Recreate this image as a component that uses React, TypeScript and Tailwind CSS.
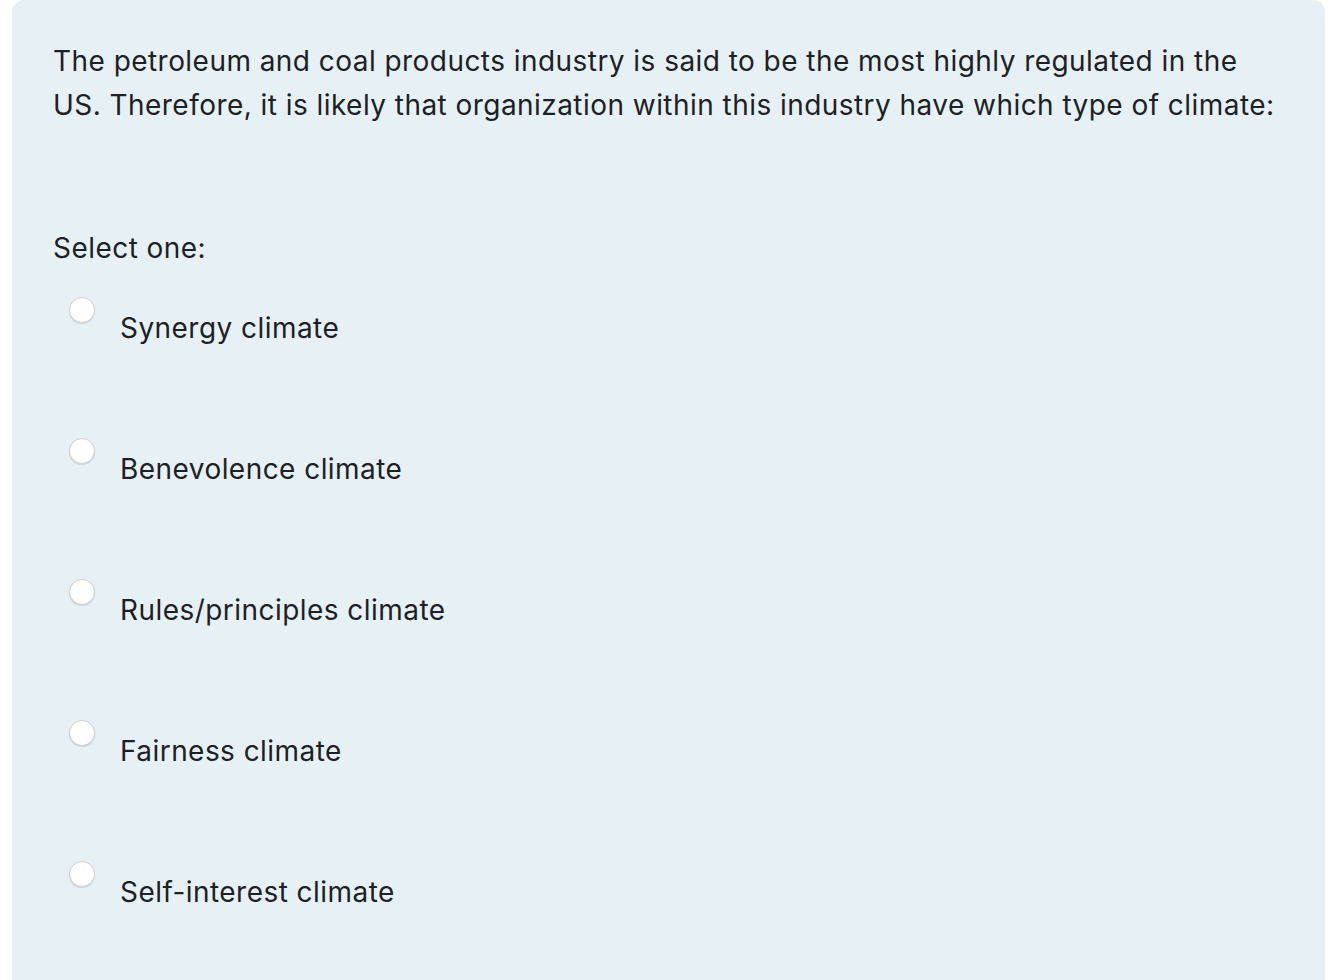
const options = [
  "Synergy climate",
  "Benevolence climate",
  "Rules/principles climate",
  "Fairness climate",
  "Self-interest climate",
];

function Radio() {
  return (
    <span className="block h-[26px] w-[26px] shrink-0 rounded-full border border-[#cfcfcf] bg-white shadow-[0_1px_1px_rgba(0,0,0,0.12)]" />
  );
}

export default function App() {
  return (
    <div className="min-h-[980px] bg-white pl-[12px] pr-[18px] font-['Inter',sans-serif] tracking-[0.45px] text-[#1d2125]">
      <div className="min-h-[980px] rounded-t-[12px] bg-[#e7f1f5] pl-[41px] pr-[41px] pt-[39px]">
        <p className="text-[28px] leading-[44px]">
          The petroleum and coal products industry is said to be the most highly regulated in the US. Therefore, it is likely that organization within this industry have which type of climate:
        </p>
        <p className="mt-[99px] text-[28px] leading-[44px]">Select one:</p>
        <div className="mt-[36px] flex flex-col">
          {options.map((o) => (
            <label key={o} className="flex h-[141px] items-start">
              <span className="ml-[16px] mt-[-9px]">
                <Radio />
              </span>
              <span className="ml-[25px] text-[28px] leading-[44px]">{o}</span>
            </label>
          ))}
        </div>
      </div>
    </div>
  );
}
